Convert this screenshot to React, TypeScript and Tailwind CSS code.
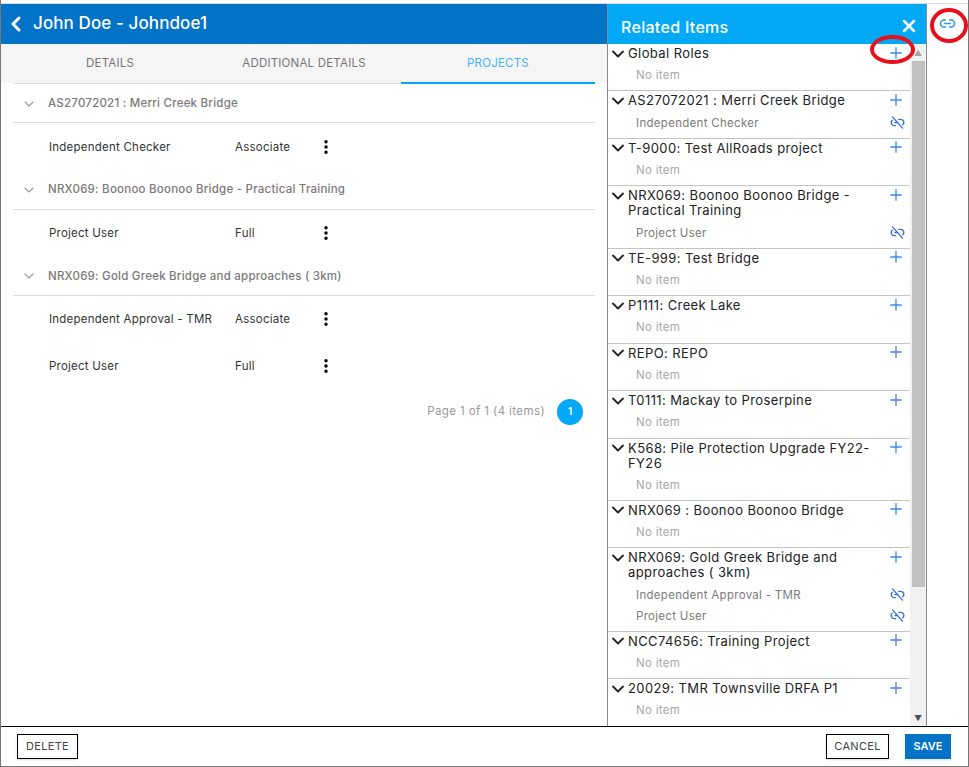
import { ChevronDown, ChevronLeft, Link2, MoreVertical, Plus, X } from "lucide-react";

const font = "font-['Inter','Noto_Sans',sans-serif]";

interface Section {
  title: string[];
  items: string[];
}

const sections: Section[] = [
  { title: ["Global Roles"], items: [] },
  { title: ["AS27072021 : Merri Creek Bridge"], items: ["Independent Checker"] },
  { title: ["T-9000: Test AllRoads project"], items: [] },
  { title: ["NRX069: Boonoo Boonoo Bridge -", "Practical Training"], items: ["Project User"] },
  { title: ["TE-999: Test Bridge"], items: [] },
  { title: ["P1111: Creek Lake"], items: [] },
  { title: ["REPO: REPO"], items: [] },
  { title: ["T0111: Mackay to Proserpine"], items: [] },
  { title: ["K568: Pile Protection Upgrade FY22-", "FY26"], items: [] },
  { title: ["NRX069 : Boonoo Boonoo Bridge"], items: [] },
  { title: ["NRX069: Gold Greek Bridge and", "approaches ( 3km)"], items: ["Independent Approval - TMR", "Project User"] },
  { title: ["NCC74656: Training Project"], items: [] },
  { title: ["20029: TMR Townsville DRFA P1"], items: [] },
];

const projects = [
  {
    name: "AS27072021 : Merri Creek Bridge",
    rows: [["Independent Checker", "Associate"]],
  },
  {
    name: "NRX069: Boonoo Boonoo Bridge - Practical Training",
    rows: [["Project User", "Full"]],
  },
  {
    name: "NRX069: Gold Greek Bridge and approaches ( 3km)",
    rows: [
      ["Independent Approval - TMR", "Associate"],
      ["Project User", "Full"],
    ],
  },
];

// chain with a slash through it, closer to the reference than lucide's Link2Off
function UnlinkIcon() {
  return (
    <svg viewBox="0 0 24 24" fill="none" stroke="currentColor" strokeWidth={2.2} strokeLinecap="round" className="w-[15px] h-[15px] text-[#3b6fe0]">
      <path d="M9 17H7A5 5 0 0 1 3.5 8.4" />
      <path d="M14 7h3a5 5 0 0 1 3.5 8.6" />
      <path d="M8 12h4" />
      <path d="M4 3l16 18" />
    </svg>
  );
}

function RelatedSection({ section }: { section: Section }) {
  return (
    <div className="border-b border-[#c4c4c4] pt-[2px] pb-[4.45px]">
      <div className="flex">
        <ChevronDown className="w-[20px] h-[20px] shrink-0 ml-[-0.5px] mr-[0.5px] my-[-2.5px] text-[#222]" strokeWidth={2.2} />
        <div className="flex-1 text-[13px] leading-[15px] tracking-[0.4px] text-[#222]">
          {section.title.map((line) => (
            <div key={line} className="whitespace-nowrap">{line}</div>
          ))}
        </div>
        <Plus className="w-[18px] h-[18px] shrink-0 mt-[-2.5px] mb-[-0.5px] mr-[5.5px] text-[#3b8bf0]" strokeWidth={1.8} />
      </div>
      <div className="mt-[4px]">
        {section.items.length === 0 && (
          <div className="h-[21px] pl-[28px] text-[11.5px] tracking-[0.3px] leading-[20px] text-[#a8a8a8]">No item</div>
        )}
        {section.items.map((item) => (
          <div key={item} className="h-[21px] pl-[28px] pr-[5px] flex items-center justify-between text-[11.5px] tracking-[0.3px] text-[#7b7b7b]">
            <span className="pt-[1px]">{item}</span>
            <UnlinkIcon />
          </div>
        ))}
      </div>
    </div>
  );
}

export default function App() {
  return (
    <div className={`relative w-[969px] h-[767px] bg-white overflow-hidden flex flex-col border-l border-b border-r border-[#777] pt-[3px] ${font}`}>
      <div className="flex flex-1 min-h-0 border-t border-[#ddd]">
        {/* Left side */}
        <div className="w-[606px] flex flex-col">
          <div className="h-[40px] bg-[#0273c6] flex items-center text-white">
            <ChevronLeft className="w-[24px] h-[24px] ml-[3px]" strokeWidth={3} />
            <span className="ml-[5px] text-[17px] font-medium tracking-[0.1px]">John Doe - Johndoe1</span>
          </div>
          <div className="h-[39px] bg-[#f5f5f5] pl-[12px] pr-[12px]">
            <div className="relative h-[40px] flex border-b border-[#ddd] text-[11.5px] tracking-[0.2px]">
              <div className="w-[194px] flex items-center justify-center text-[#777]">DETAILS</div>
              <div className="w-[194px] flex items-center justify-center text-[#777]">ADDITIONAL DETAILS</div>
              <div className="w-[194px] flex items-center justify-center text-[#45b3f5]">PROJECTS</div>
              <div className="absolute right-0 bottom-[-1px] w-[194px] h-[2px] bg-[#03a9f4]"></div>
            </div>
          </div>
          <div className="pl-[12px] pr-[12px] pt-[1px]">
            {projects.map((p) => (
              <div key={p.name}>
                <div className="h-[39.3px] border-b border-[#ddd] flex items-center pt-[1px] text-[11.5px] font-medium tracking-[0.23px] text-[#7a7a7a]">
                  <ChevronDown className="w-[16px] h-[16px] ml-[8px] text-[#999]" strokeWidth={1.6} />
                  <span className="ml-[11px]">{p.name}</span>
                </div>
                <div className="border-b border-[#ddd] last:border-b-0">
                  {p.rows.map((r, i) => (
                    <div key={i} className="h-[47px] flex items-center text-[11.5px] tracking-[0.23px] text-[#333]">
                      <span className="ml-[36px] w-[186px] pt-[1px] whitespace-nowrap">{r[0]}</span>
                      <span className="w-[82px] pt-[1px]">{r[1]}</span>
                      <MoreVertical className="w-[18px] h-[18px] text-black" strokeWidth={2.6} />
                    </div>
                  ))}
                </div>
              </div>
            ))}
            <div className="flex items-center justify-end h-[44px] pr-[12px]">
              <span className="text-[11.5px] tracking-[0.4px] text-[#999]">Page 1 of 1 (4 items)</span>
              <span className="ml-[12px] w-[26px] h-[26px] rounded-full bg-[#03a9f4] text-white text-[10px] font-semibold flex items-center justify-center">1</span>
            </div>
          </div>
        </div>

        {/* Related items panel */}
        <div className="w-[320px] flex flex-col border-l border-r border-[#8a8a8a] min-h-0">
          <div className="h-[40px] bg-[#03a9f4] flex items-center justify-between text-white shrink-0">
            <span className="ml-[13px] mt-[5px] text-[16px] font-medium tracking-[0.3px]">Related Items</span>
            <X className="w-[20px] h-[20px] mr-[7px] mt-[4px]" strokeWidth={3} />
          </div>
          <div className="flex flex-1 min-h-0">
            <div className="w-[302px] overflow-hidden">
              {sections.map((s) => (
                <RelatedSection key={s.title[0]} section={s} />
              ))}
            </div>
            <div className="w-[16px] bg-[#f1f1f1] flex flex-col items-center">
              <div className="h-[17px] flex items-center justify-center text-[#a3a3a3] text-[8px] leading-none">▲</div>
              <div className="w-[13px] h-[526px] bg-[#c1c1c1]"></div>
              <div className="flex-1"></div>
              <div className="h-[17px] flex items-center justify-center text-[#505050] text-[8px] leading-none">▼</div>
            </div>
          </div>
        </div>

        {/* Link strip */}
        <div className="flex-1 flex justify-center pt-[11px] pr-[1px]">
          <Link2 className="w-[17px] h-[17px] text-[#2a9bea]" strokeWidth={2.2} />
        </div>
      </div>

      {/* Footer */}
      <div className="h-[40px] border-t border-black flex items-center justify-between shrink-0 pl-[16px] pr-[17px] bg-white">
        <button className="h-[25px] w-[61px] border border-black text-[11px] tracking-[0.3px] text-[#444] shadow-sm">DELETE</button>
        <div className="flex gap-[16px]">
          <button className="h-[25px] w-[63px] border border-black text-[11px] tracking-[0.3px] text-[#444] shadow-sm">CANCEL</button>
          <button className="h-[25px] w-[46px] bg-[#0273c6] text-white text-[11px] font-semibold shadow-sm">SAVE</button>
        </div>
      </div>

      {/* Red annotation circles */}
      <div className="absolute left-[869px] top-[35px] w-[45px] h-[29px] rounded-[50%] border-[4px] border-[#e8101c]"></div>
      <div className="absolute left-[929px] top-[8px] w-[38px] h-[35px] rounded-[50%] border-[4px] border-[#e8101c]"></div>
    </div>
  );
}
